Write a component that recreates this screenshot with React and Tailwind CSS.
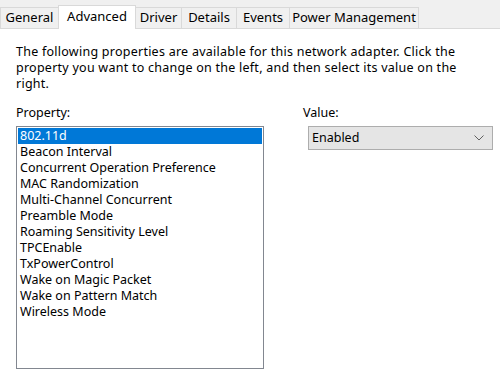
const tabs = [
  { label: 'General', w: 'w-[58px]' },
  { label: 'Advanced', w: 'w-[78px]', active: true },
  { label: 'Driver', w: 'w-[45px]' },
  { label: 'Details', w: 'w-[55px]' },
  { label: 'Events', w: 'w-[53px]' },
  { label: 'Power Management', w: 'w-[130px]', last: true },
];

const properties = [
  '802.11d',
  'Beacon Interval',
  'Concurrent Operation Preference',
  'MAC Randomization',
  'Multi-Channel Concurrent',
  'Preamble Mode',
  'Roaming Sensitivity Level',
  'TPCEnable',
  'TxPowerControl',
  'Wake on Magic Packet',
  'Wake on Pattern Match',
  'Wireless Mode',
];

const intro = [
  'The following properties are available for this network adapter. Click the',
  'property you want to change on the left, and then select its value on the',
  'right.',
];

const Tab = ({ label, w, active, afterActive, last }) => {
  if (active) {
    return (
      <div className={`${w} shrink-0 h-[24px] border-l border-r border-t border-[#d9d9d9] bg-white flex items-center justify-center pb-[2px]`}>
        {label}
      </div>
    );
  }
  return (
    <div
      className={`${w} shrink-0 h-[22px] border-t border-b border-[#d9d9d9] bg-[#f0f0f0] flex items-center justify-center ${
        afterActive ? '' : 'border-l'
      } ${last ? 'border-r' : ''}`}
    >
      {label}
    </div>
  );
};

export default function App() {
  return (
    <div
      className="w-[500px] h-[379px] bg-white text-[12.5px] text-black overflow-hidden"
      style={{ fontFamily: '"Noto Sans", "Liberation Sans", sans-serif' }}
    >
      {/* tab strip */}
      <div className="flex items-end h-[29px] bg-[#f0f0f0] text-[13px]">
        {tabs.map((t, i) => (
          <Tab key={t.label} {...t} afterActive={i > 0 && tabs[i - 1].active} />
        ))}
        <div className="flex-1 h-px bg-[#d9d9d9]" />
      </div>

      <div className="pl-[16px]">
        <div className="mt-[15px] tracking-[0.25px]">
          {intro.map((line) => (
            <div key={line} className="h-[16px] leading-[16px] whitespace-nowrap">
              {line}
            </div>
          ))}
        </div>

        <div className="flex mt-[13px]">
          <div className="w-[248px] shrink-0">
            <div className="leading-[16px]">Property:</div>
            <div className="mt-[5px] h-[243px] border border-[#828790] p-px">
              {properties.map((p, i) => (
                <div
                  key={p}
                  className={`h-[16px] leading-[16px] pl-[2px] whitespace-nowrap ${
                    i === 0 ? 'bg-[#0078d7] text-white' : ''
                  }`}
                >
                  {p}
                </div>
              ))}
            </div>
          </div>

          <div className="ml-[39px] shrink-0">
            <div className="leading-[16px]">Value:</div>
            <div className="ml-[5px] mt-[5px] w-[185px] h-[24px] border border-[#adadad] bg-[#e5e5e5] flex items-center justify-between pl-[3px] pr-[8px]">
              <span>Enabled</span>
              <svg width="10" height="6" viewBox="0 0 10 6" fill="none">
                <path d="M0.5 0.5 L5 5 L9.5 0.5" stroke="#606060" strokeWidth="1" />
              </svg>
            </div>
          </div>
        </div>
      </div>
    </div>
  );
}
